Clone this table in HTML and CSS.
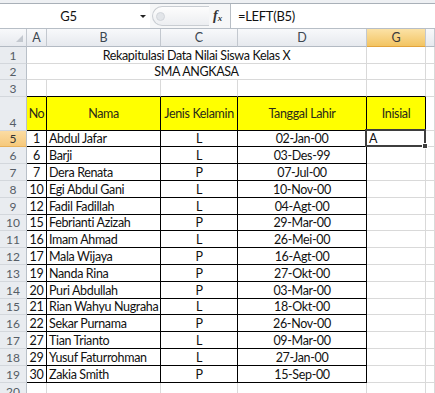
FILE: index.html
```html
<!DOCTYPE html>
<html>
<head>
<meta charset="utf-8">
<link rel="stylesheet" href="styles.css">
</head>
<body>
<div class="fbar">
  <div class="namebox"><span class="nb-text">G5</span><span class="nb-arrow"></span></div>
  <div class="fmid">
    <div class="capsule"><span class="dot"></span></div>
    <span class="fx"><i>f</i><sub>x</sub></span>
  </div>
  <div class="finput">=LEFT(B5)</div>
</div>
<div class="sheet">
  <div class="ch corner"><svg width="8" height="8" viewBox="0 0 8 8"><polygon points="7,0 7,7 0,7" fill="#c3c8cf"/></svg></div>
  <div class="ch">A</div><div class="ch">B</div><div class="ch">C</div><div class="ch">D</div><div class="ch chsel">G</div><div class="ch"></div>

  <div class="rh">1</div><div class="c span4 ctr">Rekapitulasi Data Nilai Siswa Kelas X</div><div class="c"></div><div class="c"></div>
  <div class="rh">2</div><div class="c span4 ctr">SMA ANGKASA</div><div class="c"></div><div class="c"></div>
  <div class="rh">3</div><div class="c btm"></div><div class="c btm"></div><div class="c btm"></div><div class="c btm"></div><div class="c btm"></div><div class="c"></div>

  <div class="rh">4</div><div class="c bk yl hd ctr">No</div><div class="c bk yl hd ctr">Nama</div><div class="c bk yl hd ctr">Jenis Kelamin</div><div class="c bk yl hd ctr">Tanggal Lahir</div><div class="c bk yl hd ctr">Inisial</div><div class="c"></div>

  <div class="rh rhsel">5</div><div class="c bk ctr">1</div><div class="c bk">Abdul Jafar</div><div class="c bk ctr">L</div><div class="c bk ctr">02-Jan-00</div><div class="c active">A<span class="selbox"><span class="handle"></span></span></div><div class="c"></div>
  <div class="rh">6</div><div class="c bk ctr">6</div><div class="c bk">Barji</div><div class="c bk ctr">L</div><div class="c bk ctr">03-Des-99</div><div class="c"></div><div class="c"></div>
  <div class="rh">7</div><div class="c bk ctr">7</div><div class="c bk">Dera Renata</div><div class="c bk ctr">P</div><div class="c bk ctr">07-Jul-00</div><div class="c"></div><div class="c"></div>
  <div class="rh">8</div><div class="c bk ctr">10</div><div class="c bk">Egi Abdul Gani</div><div class="c bk ctr">L</div><div class="c bk ctr">10-Nov-00</div><div class="c"></div><div class="c"></div>
  <div class="rh">9</div><div class="c bk ctr">12</div><div class="c bk">Fadil Fadillah</div><div class="c bk ctr">L</div><div class="c bk ctr">04-Agt-00</div><div class="c"></div><div class="c"></div>
  <div class="rh">10</div><div class="c bk ctr">15</div><div class="c bk">Febrianti Azizah</div><div class="c bk ctr">P</div><div class="c bk ctr">29-Mar-00</div><div class="c"></div><div class="c"></div>
  <div class="rh">11</div><div class="c bk ctr">16</div><div class="c bk">Imam Ahmad</div><div class="c bk ctr">L</div><div class="c bk ctr">26-Mei-00</div><div class="c"></div><div class="c"></div>
  <div class="rh">12</div><div class="c bk ctr">17</div><div class="c bk">Mala Wijaya</div><div class="c bk ctr">P</div><div class="c bk ctr">16-Agt-00</div><div class="c"></div><div class="c"></div>
  <div class="rh">13</div><div class="c bk ctr">19</div><div class="c bk">Nanda Rina</div><div class="c bk ctr">P</div><div class="c bk ctr">27-Okt-00</div><div class="c"></div><div class="c"></div>
  <div class="rh">14</div><div class="c bk ctr">20</div><div class="c bk">Puri Abdullah</div><div class="c bk ctr">P</div><div class="c bk ctr">03-Mar-00</div><div class="c"></div><div class="c"></div>
  <div class="rh">15</div><div class="c bk ctr">21</div><div class="c bk">Rian Wahyu Nugraha</div><div class="c bk ctr">L</div><div class="c bk ctr">18-Okt-00</div><div class="c"></div><div class="c"></div>
  <div class="rh">16</div><div class="c bk ctr">22</div><div class="c bk">Sekar Purnama</div><div class="c bk ctr">P</div><div class="c bk ctr">26-Nov-00</div><div class="c"></div><div class="c"></div>
  <div class="rh">17</div><div class="c bk ctr">27</div><div class="c bk">Tian Trianto</div><div class="c bk ctr">L</div><div class="c bk ctr">09-Mar-00</div><div class="c"></div><div class="c"></div>
  <div class="rh">18</div><div class="c bk ctr">29</div><div class="c bk">Yusuf Faturrohman</div><div class="c bk ctr">L</div><div class="c bk ctr">27-Jan-00</div><div class="c"></div><div class="c"></div>
  <div class="rh">19</div><div class="c bk ctr">30</div><div class="c bk">Zakia Smith</div><div class="c bk ctr">P</div><div class="c bk ctr">15-Sep-00</div><div class="c"></div><div class="c"></div>
  <div class="rh">20</div><div class="c"></div><div class="c"></div><div class="c"></div><div class="c"></div><div class="c"></div><div class="c"></div>
</div>
</body>
</html>
```

FILE: styles.css
```css
html, body {
  margin: 0;
  padding: 0;
  overflow: hidden;
  background: #fff;
}
body {
  font-family: Lato, "Open Sans", sans-serif;
  font-size: 12.5px;
  letter-spacing: -0.35px;
  color: #111;
  width: 435px;
  height: 393px;
}

/* formula bar */
.fbar {
  display: flex;
  height: 24px;
  border-top: 3px solid #eef0f3;
  box-shadow: inset 0 1px 0 #a9b0b8;
  border-bottom: 1px solid #b7bec6;
  padding-top: 1px;
  font-size: 13px;
  letter-spacing: -0.3px;
}
.namebox {
  width: 150px;
  display: flex;
  align-items: center;
  background: #fff;
}
.nb-text {
  width: 137px;
  text-align: center;
}
.nb-arrow {
  width: 0;
  height: 0;
  border-left: 3px solid transparent;
  border-right: 3px solid transparent;
  border-top: 3px solid #222;
  margin-left: 3px;
}
.fmid {
  width: 80px;
  display: flex;
  align-items: center;
  background: #f6f7f8;
}
.capsule {
  width: 56px;
  height: 18px;
  margin-left: 2px;
  border: 1px solid #c9cdd2;
  border-right: none;
  border-radius: 10px 0 0 10px;
  background: linear-gradient(#fdfdfd, #eceef1);
  display: flex;
  align-items: center;
}
.dot {
  width: 7px;
  height: 7px;
  border-radius: 50%;
  background: #e2e5e9;
  border: 1px solid #d2d6db;
  margin-left: 3px;
}
.fx {
  font-family: "Liberation Serif", serif;
  font-size: 14px;
  font-weight: bold;
  color: #333;
  margin-left: 4px;
  letter-spacing: 0;
}
.fx sub {
  font-size: 9px;
  font-style: italic;
  vertical-align: -1px;
}
.finput {
  flex: 1;
  background: #fff;
  border-left: 1px solid #b8bec5;
  display: flex;
  align-items: center;
  padding-left: 7px;
}

/* sheet grid */
.sheet {
  display: grid;
  grid-template-columns: 27px 20px 114px 77px 129px 59px 1fr;
  grid-template-rows: 18px 17px 16px 17px 34px 16px 17px 17px 17px 17px 16px 17px 17px 17px 17px 16px 17px 17px 17px 17px 17px;
}
.c, .rh, .ch {
  box-sizing: border-box;
  border-right: 1px solid #d9d9d9;
  border-bottom: 1px solid #d9d9d9;
  display: flex;
  align-items: flex-end;
  white-space: nowrap;
  overflow: hidden;
  padding: 0 2px 0 2px;
  line-height: 15px;
}
.ch {
  background: linear-gradient(#f8f9fb, #e6e9ee);
  border-right-color: #c3c8cf;
  border-bottom-color: #b3bac3;
  justify-content: center;
  align-items: center;
  color: #3c4650;
  font-size: 12.5px;
  letter-spacing: 0;
}
.corner {
  justify-content: flex-end;
  align-items: flex-end;
  padding: 0 2px 3px 0;
}
.chsel {
  background: linear-gradient(#fbe2a6, #f3c462);
  border-bottom-color: #e2a33c;
  color: #3a3a3a;
}
.rh {
  background: #e9ecf0;
  border-right-color: #b9c0c8;
  border-bottom-color: #d3d7dc;
  justify-content: center;
  color: #555d66;
  font-size: 12px;
  letter-spacing: 0;
}
.rhsel {
  background: linear-gradient(#fbdca3, #f6c97c);
  border-bottom-color: #e8b15a;
  color: #333;
}
.span4 {
  grid-column: span 4;
}
.ctr {
  justify-content: center;
}
.hd {
  align-items: center;
  color: #2a2a1a;
}
.yl {
  background: #ffff00;
}
.bk {
  border-right-color: #000;
  border-bottom-color: #000;
}
.btm {
  border-bottom-color: #000;
}
.active {
  position: relative;
  overflow: visible;
}
.selbox {
  position: absolute;
  top: -2px;
  left: -2px;
  right: -1px;
  bottom: -1px;
  border: 2px solid #3e3e3e;
  z-index: 2;
}
.handle {
  position: absolute;
  right: -4px;
  bottom: -4px;
  width: 4px;
  height: 4px;
  background: #3e3e3e;
  border: 1px solid #fff;
}
```
